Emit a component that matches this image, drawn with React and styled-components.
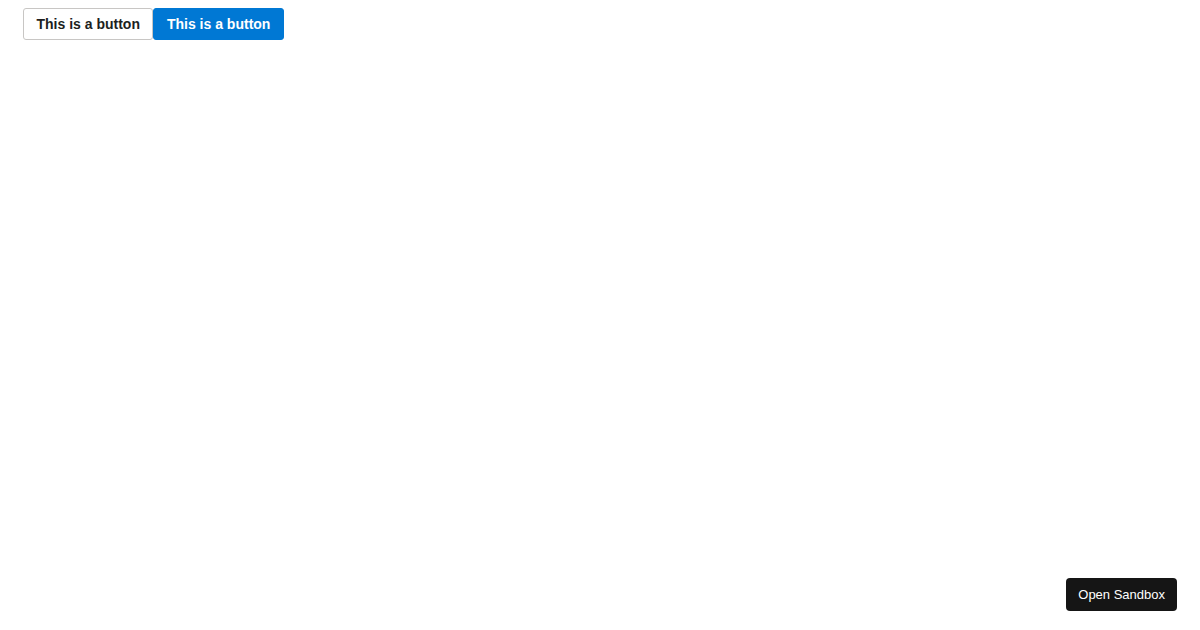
import React from 'react';
import styled, { createGlobalStyle } from 'styled-components';

const GlobalStyle = createGlobalStyle`
	body {
		margin: 0;
		background: #ffffff;
		font-family: 'Liberation Sans', Arial, sans-serif;
	}
`;

const Page = styled.div`
	padding: 8px 23px;
`;

const Row = styled.div`
	display: flex;
	align-items: center;
`;

const Button = styled.button`
	height: 32px;
	padding: 0 12.5px;
	border-radius: 3px;
	font-family: 'Liberation Sans', Arial, sans-serif;
	font-size: 14px;
	font-weight: 700;
	cursor: pointer;
	border: 1px solid ${(p) => (p.primary ? '#0078d4' : '#c8c6c4')};
	background: ${(p) => (p.primary ? '#0078d4' : '#ffffff')};
	color: ${(p) => (p.primary ? '#ffffff' : '#201f1e')};
`;

const SandboxButton = styled.button`
	position: fixed;
	right: 23px;
	bottom: 19px;
	height: 33px;
	padding: 0 12px;
	border: none;
	border-radius: 4px;
	background: #151515;
	color: #ffffff;
	font-family: 'Liberation Sans', Arial, sans-serif;
	font-size: 13px;
	cursor: pointer;
`;

const App = () => {
	return (
		<Page>
			<GlobalStyle />
			<Row>
				<Button>This is a button</Button>
				<Button primary>This is a button</Button>
			</Row>
			<SandboxButton>Open Sandbox</SandboxButton>
		</Page>
	);
};

export default App;
